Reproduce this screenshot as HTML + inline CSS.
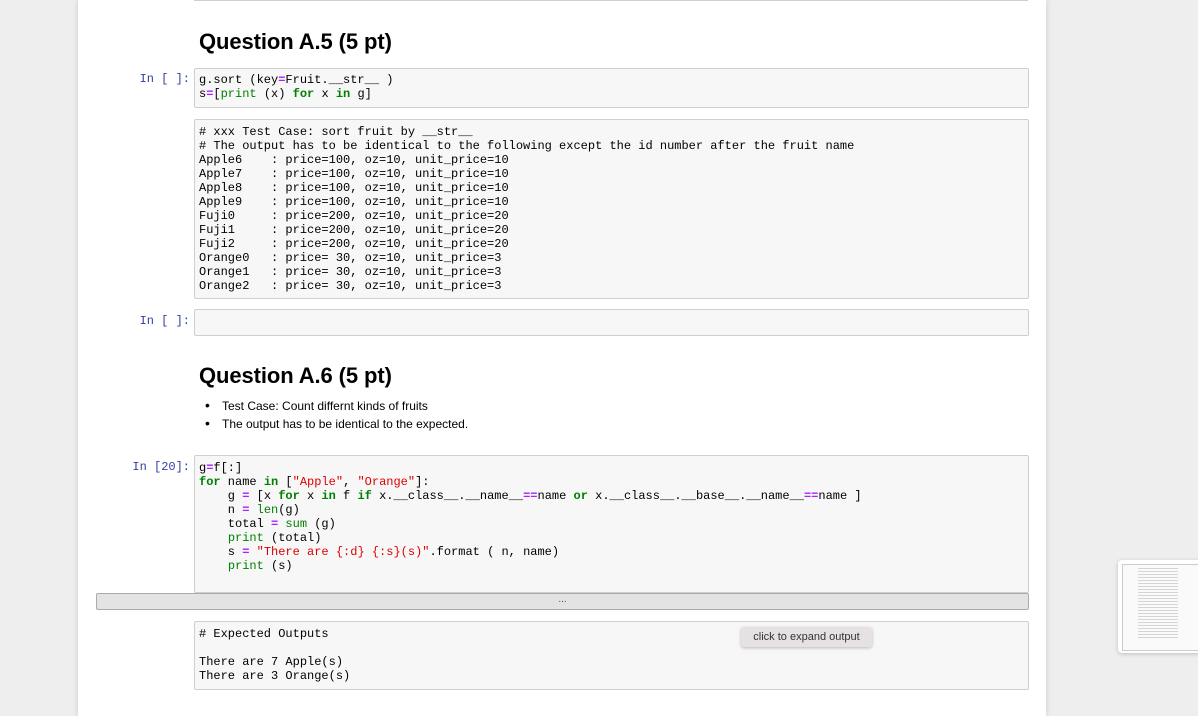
<!DOCTYPE html>
<html><head><style>
body{margin:0;width:1198px;height:716px;background:#eeeeee;position:relative;overflow:hidden;font-family:"Liberation Sans",sans-serif}
.nb{position:absolute;left:78px;top:0;width:968px;height:716px;background:#fff;box-shadow:0 0 6px rgba(0,0,0,.15)}
.abs{position:absolute}
.box{position:absolute;left:194px;width:833px;background:#f7f7f7;border:1px solid #cfcfcf;border-radius:2px}
pre{margin:0;font-family:"Liberation Mono",monospace;font-size:12px;line-height:14px;color:#000}
.pr{position:absolute;font-family:"Liberation Mono",monospace;font-size:12px;color:#303f9f;text-align:right;width:62px}
h2{position:absolute;left:199px;margin:0;font-size:22px;font-weight:bold;letter-spacing:-0.1px}
.k{color:#008000;font-weight:bold}.o{color:#aa22ff;font-weight:bold}.b{color:#008000}.s{color:#d00}
</style></head><body>
<div class="nb"></div>
<div class="abs" style="left:194px;top:0;width:834px;height:1px;background:#cfcfcf"></div>
<h2 style="top:29px">Question A.5 (5 pt)</h2>
<div class="pr" style="left:128px;top:72px">In [ ]:</div>
<div class="box" style="top:68px;height:38px"><pre style="padding:4px 0 0 4px">g.sort (key<span class="o">=</span>Fruit.__str__ )
s<span class="o">=</span>[<span class="b">print</span> (x) <span class="k">for</span> x <span class="k">in</span> g]</pre></div>
<div class="box" style="top:119px;height:178px"><pre style="padding:5px 0 0 4px"># xxx Test Case: sort fruit by __str__
# The output has to be identical to the following except the id number after the fruit name
Apple6    : price=100, oz=10, unit_price=10
Apple7    : price=100, oz=10, unit_price=10
Apple8    : price=100, oz=10, unit_price=10
Apple9    : price=100, oz=10, unit_price=10
Fuji0     : price=200, oz=10, unit_price=20
Fuji1     : price=200, oz=10, unit_price=20
Fuji2     : price=200, oz=10, unit_price=20
Orange0   : price= 30, oz=10, unit_price=3
Orange1   : price= 30, oz=10, unit_price=3
Orange2   : price= 30, oz=10, unit_price=3</pre></div>
<div class="pr" style="left:128px;top:314px">In [ ]:</div>
<div class="box" style="top:309px;height:25px"></div>
<h2 style="top:363px">Question A.6 (5 pt)</h2>
<div class="abs" style="left:205px;top:397px;font-size:12px;line-height:17px">
<div><span style="display:inline-block;width:17px;font-size:14px">•</span>Test Case: Count differnt kinds of fruits</div>
<div><span style="display:inline-block;width:17px;font-size:14px">•</span>The output has to be identical to the expected.</div></div>
<div class="pr" style="left:128px;top:460px">In [20]:</div>
<div class="box" style="top:455px;height:136px"><pre style="padding:5px 0 0 4px">g<span class="o">=</span>f[:]
<span class="k">for</span> name <span class="k">in</span> [<span class="s">"Apple"</span>, <span class="s">"Orange"</span>]:
    g <span class="o">=</span> [x <span class="k">for</span> x <span class="k">in</span> f <span class="k">if</span> x.__class__.__name__<span class="o">==</span>name <span class="k">or</span> x.__class__.__base__.__name__<span class="o">==</span>name ]
    n <span class="o">=</span> <span class="b">len</span>(g)
    total <span class="o">=</span> <span class="b">sum</span> (g)
    <span class="b">print</span> (total)
    s <span class="o">=</span> <span class="s">"There are {:d} {:s}(s)"</span>.format ( n, name)
    <span class="b">print</span> (s)</pre></div>
<div class="abs" style="left:96px;top:593px;width:931px;height:15px;background:#e3e3e3;border:1px solid #aaa;border-radius:2px;text-align:center;font-size:10px;line-height:12px;color:#555">...</div>
<div class="box" style="top:621px;height:67px"><pre style="padding:5px 0 0 4px"># Expected Outputs

There are 7 Apple(s)
There are 3 Orange(s)</pre></div>
<div class="abs" style="left:741px;top:627px;width:131px;height:20px;background:#e6e2e4;border-radius:3px;box-shadow:0 1px 3px rgba(0,0,0,.25);font-size:11px;line-height:20px;text-align:center;color:#333">click to expand output</div>
<div class="abs" style="left:1118px;top:560px;width:85px;height:93px;background:#fff;border-radius:4px;box-shadow:0 1px 4px rgba(0,0,0,.2)">
<div class="abs" style="left:4px;top:4px;width:80px;height:85px;border:1px solid #ccc;background:#fafafa"></div>
<div class="abs" style="left:20px;top:8px;width:40px;height:70px;background:repeating-linear-gradient(#bbb 0 1px,transparent 1px 3px);opacity:.6"></div>
</div>
</body></html>
